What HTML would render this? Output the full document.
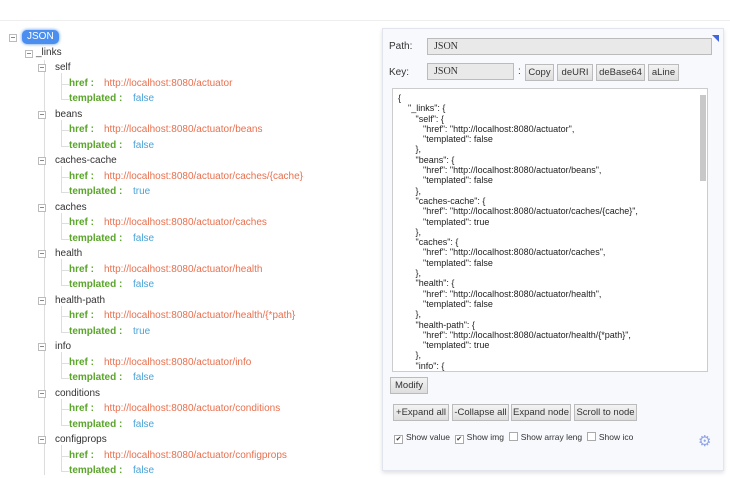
<!DOCTYPE html>
<html><head><meta charset="utf-8"><style>
body{margin:0;width:730px;height:475px;background:#fff;position:relative;overflow:hidden;font-family:"Liberation Sans",sans-serif;font-size:10px;color:#333}
.a{position:absolute;white-space:nowrap;line-height:14px}
.ex{position:absolute;width:6px;height:6px;border:1px solid #bbb;background:#fff;font-size:0}
.ex:after{content:"";position:absolute;left:1px;top:2px;width:4px;height:1px;background:#888}
.k{color:#5aa52a;font-weight:bold}
.u{color:#e8704f}
.b{color:#4aa3d8}
.vl{position:absolute;border-left:1px solid #ddd}
.hl{position:absolute;border-top:1px solid #ddd;width:8px}
.panel{position:absolute;left:382px;top:28px;width:340px;height:441px;background:#f8f9fd;border:1px solid #e2e5ee;box-shadow:0 2px 4px rgba(0,0,0,.12)}
.inp{position:absolute;background:#e9e9e9;border:1px solid #bbb;font-family:"Liberation Serif",serif;font-size:10px;line-height:16px;padding-left:6px;box-sizing:border-box}
.btn{position:absolute;background:linear-gradient(#f3f3f3,#dedede);border:1px solid #bbb;height:17px;line-height:15px;text-align:center;font-size:9.5px;box-sizing:border-box;color:#333}
.ta{position:absolute;left:392px;top:88px;width:316px;height:284px;background:#fff;border:1px solid #ccc;box-sizing:border-box}
pre{margin:0;position:absolute;left:398px;top:93px;font-family:"Liberation Sans",sans-serif;font-size:9px;line-height:10.3px;color:#222}
.cb{display:inline-block;width:7px;height:7px;border:1px solid #aaa;background:#fff;vertical-align:-1px;margin-right:3px;font-size:7px;line-height:7px;text-align:center}
</style></head><body>
<div style="position:absolute;left:0;top:20px;width:730px;border-top:1px solid #eee"></div>
<div class="ex" style="left:9px;top:34px"></div>
<div class="a" style="left:22px;top:30px;background:#4a8ef0;color:#fff;border-radius:5px;padding:0 5px;box-shadow:0 0 3px #4a8ef0">JSON</div>
<div class="ex" style="left:25px;top:50px"></div>
<div class="a" style="left:36px;top:46px">_links</div>
<div class="vl" style="left:44px;top:60px;height:415px"></div>
<div id="t"></div>
<script>
var g=[["self","http://localhost:8080/actuator","false"],["beans","http://localhost:8080/actuator/beans","false"],["caches-cache","http://localhost:8080/actuator/caches/{cache}","true"],["caches","http://localhost:8080/actuator/caches","false"],["health","http://localhost:8080/actuator/health","false"],["health-path","http://localhost:8080/actuator/health/{*path}","true"],["info","http://localhost:8080/actuator/info","false"],["conditions","http://localhost:8080/actuator/conditions","false"],["configprops","http://localhost:8080/actuator/configprops","false"]];
var h="";
for(var i=0;i<g.length;i++){var y=37+(2+i*3)*15.5;
h+='<div class="ex" style="left:38px;top:'+(y-4)+'px"></div><div class="a" style="left:55px;top:'+(y-7)+'px">'+g[i][0]+'</div>';
h+='<div class="vl" style="left:61px;top:'+(y+5)+'px;height:'+(31-4)+'px"></div>';
var y1=y+15.5,y2=y+31;
h+='<div class="hl" style="left:61px;top:'+y1+'px"></div><div class="a" style="left:69px;top:'+(y1-7)+'px"><span class="k">href :</span></div><div class="a u" style="left:104px;top:'+(y1-7)+'px">'+g[i][1]+'</div>';
h+='<div class="hl" style="left:61px;top:'+y2+'px"></div><div class="a" style="left:69px;top:'+(y2-7)+'px"><span class="k">templated :</span></div><div class="a b" style="left:133px;top:'+(y2-7)+'px">'+g[i][2]+'</div>';}
document.getElementById("t").innerHTML=h;
</script>
<div class="panel"></div>
<div style="position:absolute;left:712px;top:35px;width:0;height:0;border-top:7px solid #4466dd;border-left:7px solid transparent"></div>
<div class="a" style="left:389px;top:40px">Path:</div>
<div class="inp" style="left:427px;top:38px;width:285px;height:17px">JSON</div>
<div class="a" style="left:389px;top:66px">Key:</div>
<div class="inp" style="left:427px;top:63px;width:87px;height:17px">JSON</div>
<div class="a" style="left:518px;top:65px">:</div>
<div class="btn" style="left:525px;top:64px;width:29px">Copy</div>
<div class="btn" style="left:557px;top:64px;width:36px">deURI</div>
<div class="btn" style="left:596px;top:64px;width:49px">deBase64</div>
<div class="btn" style="left:648px;top:64px;width:31px">aLine</div>
<div class="ta"></div>
<div style="position:absolute;left:700px;top:95px;width:6px;height:86px;background:#c8c8c8"></div>
<pre>{
    "_links": {
       "self": {
          "href": "http://localhost:8080/actuator",
          "templated": false
       },
       "beans": {
          "href": "http://localhost:8080/actuator/beans",
          "templated": false
       },
       "caches-cache": {
          "href": "http://localhost:8080/actuator/caches/{cache}",
          "templated": true
       },
       "caches": {
          "href": "http://localhost:8080/actuator/caches",
          "templated": false
       },
       "health": {
          "href": "http://localhost:8080/actuator/health",
          "templated": false
       },
       "health-path": {
          "href": "http://localhost:8080/actuator/health/{*path}",
          "templated": true
       },
       "info": {</pre>
<div class="btn" style="left:390px;top:377px;width:38px">Modify</div>
<div class="btn" style="left:393px;top:404px;width:56px">+Expand all</div>
<div class="btn" style="left:452px;top:404px;width:57px">-Collapse all</div>
<div class="btn" style="left:511px;top:404px;width:60px">Expand node</div>
<div class="btn" style="left:574px;top:404px;width:63px">Scroll to node</div>
<div class="a" style="left:394px;top:430px;font-size:8.5px"><span class="cb">✔</span>Show value &nbsp;<span class="cb">✔</span>Show img &nbsp;<span class="cb"></span>Show array leng &nbsp;<span class="cb"></span>Show ico</div>
<div class="a" style="left:698px;top:435px;font-size:15px;color:#8fa5e6">⚙</div>
</body></html>
